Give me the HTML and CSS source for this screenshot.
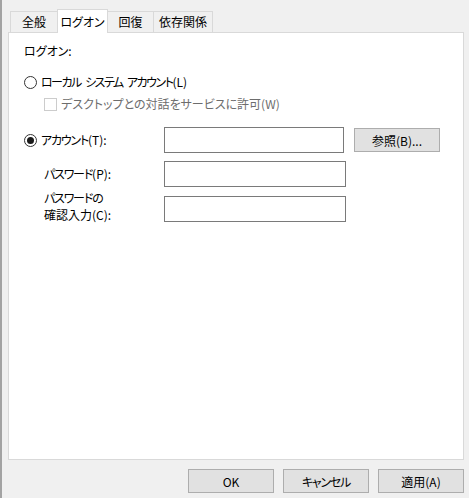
FILE: index.html
```html
<!DOCTYPE html>
<html lang="ja">
<head>
  <meta charset="UTF-8">
  <title>ログオン</title>
  <link rel="stylesheet" href="styles.css">
</head>
<body>

  <div class="dialog">
    <!-- Tab strip -->
    <div class="tabs">
      <div class="tab tab-general">全般</div>
      <div class="tab tab-logon active">ログオン</div>
      <div class="tab tab-recovery">回復</div>
      <div class="tab tab-deps">依存関係</div>
    </div>

    <div class="panel">
      <div class="heading">ログオン:</div>

      <label class="radio-row">
        <span class="radio"></span>
        <span><span class="kana spaced">ローカル システム アカウント</span>(L)</span>
      </label>

      <label class="check-row disabled">
        <span class="checkbox"></span>
        <span>デスクトップとの対話をサービスに許可(W)</span>
      </label>

      <div class="account-grid">
        <label class="radio-row">
          <span class="radio checked"></span>
          <span><span class="kana">アカウント</span>(T):</span>
        </label>
        <input type="text" class="field short">
        <button class="btn browse">参照(B)...</button>

        <div class="field-label"><span class="kana">パスワード</span>(P):</div>
        <input type="password" class="field">
        <div></div>

        <div class="field-label two-line"><span class="kana">パスワードの</span><br>確認入力(C):</div>
        <input type="password" class="field">
        <div></div>
      </div>
    </div>

    <!-- Dialog buttons -->
    <div class="footer">
      <button class="btn">OK</button>
      <button class="btn kana">キャンセル</button>
      <button class="btn">適用(A)</button>
    </div>
  </div>

</body>
</html>
```

FILE: styles.css
```css
body {
  margin: 0;
  background-color: #f0f0f0;
  font-family: "Noto Sans CJK JP", "Noto Sans", sans-serif;
  font-size: 12px;
  font-feature-settings: "palt";
  color: #000;
}

/* narrower katakana runs */
.kana {
  letter-spacing: -1.2px;
}

.kana.spaced {
  letter-spacing: -1.5px;
  word-spacing: 3px;
}

.dialog {
  height: 498px;
  border-left: 2px solid #a3a3a3;
  box-sizing: border-box;
}

.tabs {
  display: flex;
  padding: 11px 0 0 8px;
  height: 21px;
}

.tab {
  box-sizing: border-box;
  height: 21px;
  line-height: 20px;
  text-align: center;
  white-space: nowrap;
  border: 1px solid #d9d9d9;
  border-bottom: none;
  border-right: none;
  background-color: #f0f0f0;
}

.tab-general {
  width: 47px;
}

.tab-logon {
  width: 51px;
}

.tab-recovery {
  width: 46px;
}

.tab-deps {
  width: 60px;
  border-right: 1px solid #d9d9d9;
}

.tab.active {
  position: relative;
  z-index: 1;
  height: 24px;
  margin-top: -2px;
  margin-right: -1px;
  line-height: 23px;
  background-color: #fff;
  border-right: 1px solid #d9d9d9;
}

.tab.active + .tab {
  border-left: none;
  padding-left: 1px;
}

.panel {
  height: 426px;
  margin: 0 5px 0 6px;
  padding: 0 0 0 15px;
  background-color: #fff;
  border: 1px solid #d9d9d9;
}

.heading {
  margin-top: 10px;
  line-height: 16px;
}

.radio-row,
.check-row {
  display: flex;
  align-items: center;
  line-height: 16px;
}

.panel > .radio-row {
  margin-top: 15px;
}

.radio {
  flex: none;
  width: 11px;
  height: 11px;
  margin-right: 4px;
  border: 1px solid #333;
  border-radius: 50%;
  background-color: #fff;
  position: relative;
}

.radio.checked::after {
  content: "";
  position: absolute;
  left: 2px;
  top: 2px;
  width: 7px;
  height: 7px;
  border-radius: 50%;
  background-color: #1a1a1a;
}

.check-row {
  margin: 6px 0 0 20px;
}

.checkbox {
  flex: none;
  width: 11px;
  height: 11px;
  margin-right: 4px;
  border: 1px solid #cccccc;
  background-color: #fff;
}

.disabled {
  color: #6d6d6d;
}

.account-grid {
  display: grid;
  grid-template-columns: 132px 182px 86px;
  column-gap: 8px;
  row-gap: 8px;
  margin-top: 15px;
  align-items: center;
}

.field {
  box-sizing: border-box;
  height: 26px;
  width: 182px;
  margin: 0;
  border: 1px solid #7a7a7a;
  background-color: #fff;
}

.field.short {
  width: 180px;
}

.field-label {
  padding-left: 20px;
  line-height: 16px;
}

.field-label.two-line {
  line-height: 17px;
  margin-top: -6px;
}

.btn {
  box-sizing: border-box;
  width: 86px;
  height: 24px;
  padding: 0;
  border: 1px solid #adadad;
  background-color: #e1e1e1;
  font-family: inherit;
  font-size: 12px;
  font-feature-settings: "palt";
  color: #000;
}

.footer {
  display: flex;
  justify-content: flex-end;
  gap: 9px;
  padding: 9px 5px 0 0;
}
```
